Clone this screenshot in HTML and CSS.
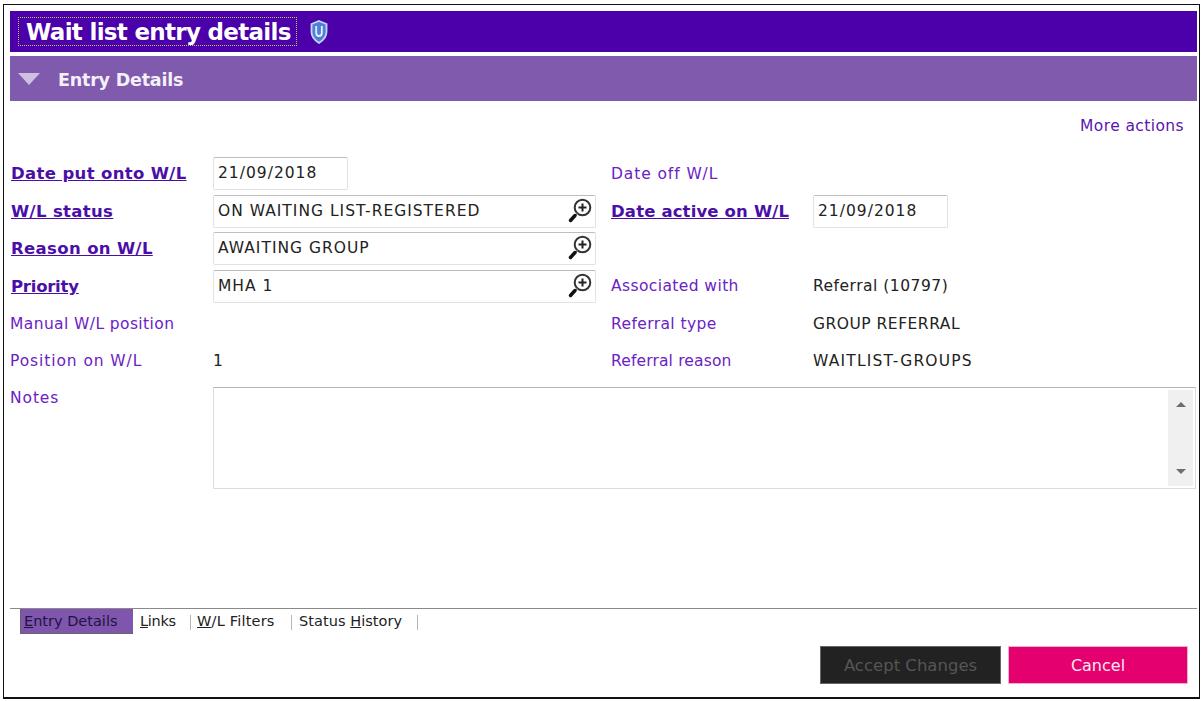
FILE: index.html
```html
<html>
<head>
	<meta charset="utf-8">
	<link rel="stylesheet" href="styles.css">
	<title>Wait list entry details</title>
</head>
<body>
	<div class="frame">
		<div class="titlebar">
			<span class="title">Wait list entry details</span>
			<svg class="shield" width="18" height="24" viewBox="0 0 18 24">
				<path d="M9 1 L16.500 4 V12 C16.500 17 13 20.500 9 23 C5 20.500 1.500 17 1.500 12 V4 Z" fill="#4f7fd8" stroke="#c4d6f6" stroke-width="1.800"/>
				<path d="M6.200 6 V13 C6.200 17 11.800 17 11.800 13 V6" fill="none" stroke="#e6eefc" stroke-width="1.800"/>
			</svg>
		</div>
		<div class="section">
			<span class="arrow"></span>
			<span class="section-name">Entry Details</span>
		</div>
		<div class="more"><a class="more-link">More actions</a></div>
		<div class="form">
			<a class="req">Date put onto W/L</a>
			<div><div class="input short">21/09/2018</div></div>
			<span class="lbl lbl-wide">Date off W/L</span>
			<span></span>

			<a class="req">W/L status</a>
			<div class="input lookup">ON WAITING LIST-REGISTERED
				<svg class="glass" viewBox="0 0 24 26"><use href="#glass"/></svg>
			</div>
			<a class="req req-mid">Date active on W/L</a>
			<div><div class="input short">21/09/2018</div></div>

			<a class="req">Reason on W/L</a>
			<div class="input lookup">AWAITING GROUP
				<svg class="glass" viewBox="0 0 24 26"><use href="#glass"/></svg>
			</div>
			<span></span>
			<span></span>

			<a class="req req-tight">Priority</a>
			<div class="input lookup">MHA 1
				<svg class="glass" viewBox="0 0 24 26"><use href="#glass"/></svg>
			</div>
			<span class="lbl">Associated with</span>
			<span class="val">Referral (10797)</span>

			<span class="lbl">Manual W/L position</span>
			<span></span>
			<span class="lbl">Referral type</span>
			<span class="val">GROUP REFERRAL</span>

			<span class="lbl lbl-wide">Position on W/L</span>
			<span class="val">1</span>
			<span class="lbl lbl-tight">Referral reason</span>
			<span class="val val-wide">WAITLIST-GROUPS</span>

			<span class="lbl lbl-wide notes-lbl">Notes</span>
			<div class="notes">
				<div class="scrollbar">
					<span class="up"></span>
					<span class="down"></span>
				</div>
			</div>
		</div>
		<div class="tabs">
			<span class="tab active"><u>E</u>ntry Details</span>
			<span class="tab links"><u>L</u>inks</span>
			<span class="tab filters"><u>W</u>/L Filters</span>
			<span class="tab history">Status <u>H</u>istory</span>
		</div>
		<div class="actions">
			<button class="btn disabled">Accept Changes</button>
			<button class="btn cancel">Cancel</button>
		</div>
	</div>
	<svg width="0" height="0" class="defs">
		<symbol id="glass" viewBox="0 0 24 26">
			<circle cx="14.500" cy="9.500" r="7.800" fill="#fff" stroke="#333" stroke-width="2"/>
			<path d="M14.500 5.500 V13.500 M10.500 9.500 H18.500" stroke="#222" stroke-width="2"/>
			<path d="M9.500 15 L7 17.500" stroke="#777" stroke-width="1.500"/>
			<path d="M7 17.500 L2.500 22.500" stroke="#111" stroke-width="3.500" stroke-linecap="round"/>
		</symbol>
	</svg>
</body>
</html>
```
FILE: styles.css
```css
html, body {
	margin: 0;
	padding: 0;
	background-color: #fff;
}
body {
	font-family: "DejaVu Sans", sans-serif;
	font-size: 15.5px;
	color: #222;
}
.defs {
	display: block;
}
.frame {
	box-sizing: border-box;
	width: 1197px;
	height: 695px;
	margin: 4px 0 0 3px;
	padding: 6px 2px 0 6px;
	border: 1.5px solid #111;
	border-bottom-width: 2px;
	display: flex;
	flex-direction: column;
}
.titlebar {
	height: 41px;
	flex: none;
	background-color: #4b00aa;
	display: flex;
	align-items: center;
	padding-left: 8px;
}
.title {
	color: #fff;
	font-size: 23px;
	font-weight: bold;
	line-height: 26px;
	padding: 1px 5px 0 7px;
	border: 1px dotted #b9c96a;
	letter-spacing: -0.7px;
}
.shield {
	margin-left: 13px;
}
.section {
	height: 45px;
	flex: none;
	margin-top: 4px;
	background-color: #7f5aad;
	display: flex;
	align-items: center;
	padding-left: 8px;
}
.arrow {
	width: 0;
	height: 0;
	border-left: 11px solid transparent;
	border-right: 11px solid transparent;
	border-top: 12px solid #cfc0e2;
}
.section-name {
	margin-left: 18px;
	padding-top: 2px;
	color: #f4f0fa;
	font-weight: bold;
	font-size: 17.5px;
	letter-spacing: -0.2px;
}
.more {
	height: 46px;
	flex: none;
	display: flex;
	justify-content: flex-end;
	padding: 16px 13px 0 0;
	box-sizing: border-box;
}
.more-link {
	color: #5a16b0;
	letter-spacing: 0.4px;
}
.form {
	flex: none;
	display: grid;
	grid-template-columns: 203px 398px 202px 383px;
	grid-auto-rows: 37.5px;
	align-items: center;
	margin-top: 8px;
}
.req {
	padding-left: 1px;
	color: #4b0fa8;
	font-weight: bold;
	text-decoration: underline;
	font-size: 16.5px;
	letter-spacing: 0.35px;
}
.req-mid {
	padding-left: 0;
	letter-spacing: 0.15px;
}
.req-tight {
	letter-spacing: -0.25px;
}
.lbl {
	color: #6a22c4;
	letter-spacing: 0.4px;
}
.lbl-wide {
	letter-spacing: 0.9px;
}
.lbl-tight {
	letter-spacing: 0.15px;
}
.val {
	color: #222;
	letter-spacing: 0.5px;
}
.val-wide {
	letter-spacing: 1.2px;
}
.input {
	box-sizing: border-box;
	height: 33px;
	line-height: 31px;
	padding-left: 4px;
	border: 1px solid #e2e2e2;
	border-top-color: #bdbdbd;
	border-radius: 2px;
	background-color: #fff;
	letter-spacing: 1px;
}
.short {
	width: 135px;
}
.lookup {
	width: 383px;
	position: relative;
}
.glass {
	position: absolute;
	top: 2px;
	right: 3px;
	width: 24px;
	height: 26px;
}
.notes-lbl {
	align-self: start;
	padding-top: 9px;
}
.notes {
	grid-column: 2 / 5;
	grid-row: span 3;
	align-self: start;
	box-sizing: border-box;
	height: 102px;
	margin-top: 7px;
	border: 1px solid #dcdcdc;
	border-top-color: #b4b4b4;
	display: flex;
	justify-content: flex-end;
}
.scrollbar {
	width: 25px;
	margin: 2px;
	background-color: #f0f0f0;
	display: flex;
	flex-direction: column;
	justify-content: space-between;
	align-items: center;
	padding: 12px 0;
	box-sizing: border-box;
}
.up, .down {
	width: 0;
	height: 0;
	border-left: 5px solid transparent;
	border-right: 5px solid transparent;
}
.up {
	border-bottom: 5px solid #6e6e6e;
}
.down {
	border-top: 5px solid #6e6e6e;
}
.tabs {
	flex: none;
	height: 37px;
	margin-top: auto;
	border-top: 1.5px solid #8a8a8a;
	display: flex;
	align-items: flex-start;
	padding-left: 10px;
	font-size: 14.5px;
}
.tab {
	box-sizing: border-box;
	height: 25px;
	line-height: 25px;
}
.active {
	width: 113px;
	padding-left: 3px;
	background-color: #7f55ad;
	border-left: 1px solid #666;
	border-bottom: 1px solid #666;
	color: #1d1440;
}
.links {
	width: 58px;
	padding-left: 7px;
	position: relative;
	letter-spacing: -0.3px;
}
.filters {
	width: 101px;
	padding-left: 6px;
	position: relative;
	letter-spacing: 0.2px;
}
.history {
	width: 126px;
	padding-left: 7px;
	position: relative;
	letter-spacing: 0.05px;
}
.links::after, .filters::after, .history::after {
	content: "";
	position: absolute;
	top: 6px;
	right: 0;
	height: 15px;
	border-right: 1px solid #b5b5b5;
}
.actions {
	flex: none;
	height: 51px;
	display: flex;
	justify-content: flex-end;
	gap: 7px;
	padding-right: 9px;
	box-sizing: border-box;
}
.btn {
	width: 181px;
	height: 38px;
	font-family: inherit;
	font-size: 16.5px;
	border: 1px solid #666;
}
.disabled {
	background-color: #222;
	color: #555;
}
.cancel {
	width: 180px;
	background-color: #e4006f;
	border-color: #f0b0d0;
	color: #fbe8f2;
	font-size: 16px;
}
```
